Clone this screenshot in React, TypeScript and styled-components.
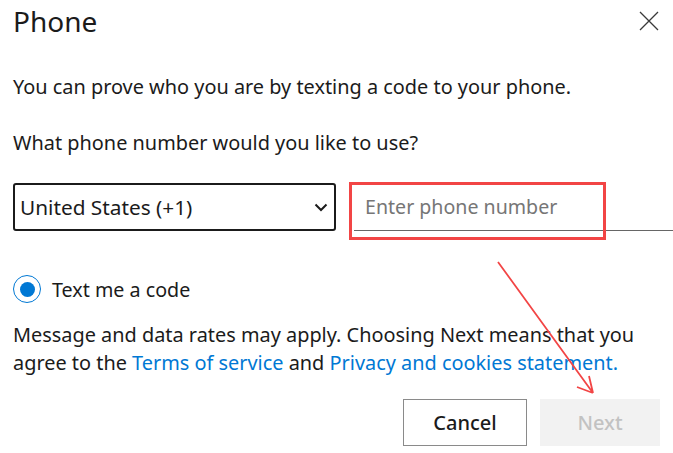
import React from 'react';
import styled, { createGlobalStyle } from 'styled-components';

const GlobalStyle = createGlobalStyle`
  html, body {
    margin: 0;
    padding: 0;
    background: #ffffff;
  }
  body {
    font-family: "Noto Sans", "Liberation Sans", sans-serif;
    color: #1b1b1b;
  }
`;

const Page = styled.div`
  position: relative;
  width: 673px;
  height: 453px;
  overflow: hidden;
  background: #ffffff;
`;

const Header = styled.div`
  display: flex;
  justify-content: space-between;
  align-items: center;
  height: 42px;
  padding: 0 12px 0 13px;
`;

const Title = styled.h1`
  margin: 0;
  font-size: 28px;
  font-weight: 400;
  line-height: 42px;
  color: #1b1b1b;
`;

const CloseButton = styled.button`
  display: flex;
  align-items: center;
  justify-content: center;
  width: 24px;
  height: 24px;
  padding: 0;
  border: none;
  background: transparent;
`;

const Body = styled.div`
  padding: 0 13px;
`;

const Text = styled.p<{ $top: number }>`
  margin: ${(p) => p.$top}px 0 0;
  font-size: 19.9px;
  line-height: 28px;
  color: #1b1b1b;
`;

const Link = styled.a`
  color: #0078d4;
  text-decoration: none;
`;

const FieldRow = styled.div`
  display: grid;
  grid-template-columns: 323px 1fr;
  column-gap: 18px;
  margin-top: 26px;
  margin-right: -13px;
`;

const Select = styled.div`
  display: flex;
  align-items: center;
  justify-content: space-between;
  box-sizing: border-box;
  height: 48px;
  padding: 0 6px 0 5px;
  border: 2px solid #1b1b1b;
  border-radius: 3px;
  font-size: 20.8px;
  color: #1b1b1b;
`;

const InputWrap = styled.div`
  position: relative;
  display: flex;
  align-items: center;
  box-sizing: border-box;
  height: 48px;
  border-bottom: 1px solid #666666;
`;

const Input = styled.input`
  width: 100%;
  border: none;
  outline: none;
  background: transparent;
  padding: 0 0 0 11px;
  font-family: inherit;
  font-size: 19.6px;
  color: #1b1b1b;

  &::placeholder {
    color: #767676;
  }
`;

const Highlight = styled.div`
  position: absolute;
  left: -5px;
  top: -1px;
  width: 257px;
  height: 58px;
  box-sizing: border-box;
  border: 3px solid #f24545;
  pointer-events: none;
`;

const RadioRow = styled.label`
  display: flex;
  align-items: center;
  gap: 11px;
  margin-top: 44px;
  font-size: 19.7px;
  color: #1b1b1b;
`;

const RadioCircle = styled.span`
  display: flex;
  align-items: center;
  justify-content: center;
  box-sizing: border-box;
  width: 28px;
  height: 28px;
  border: 1.5px solid #0078d4;
  border-radius: 50%;

  &::after {
    content: '';
    width: 15px;
    height: 15px;
    border-radius: 50%;
    background: #0078d4;
  }
`;

const Footer = styled.div`
  display: flex;
  justify-content: flex-end;
  gap: 13px;
  margin-top: 22px;
`;

const Button = styled.button<{ $disabled?: boolean }>`
  width: ${(p) => (p.$disabled ? 120 : 124)}px;
  height: 47px;
  box-sizing: border-box;
  border: ${(p) => (p.$disabled ? 'none' : '1px solid #8a8a8a')};
  background: ${(p) => (p.$disabled ? '#f2f2f2' : '#ffffff')};
  color: ${(p) => (p.$disabled ? '#c2c2c2' : '#1b1b1b')};
  font-family: inherit;
  font-size: 20px;
  font-weight: 500;
`;

const Arrow = styled.svg`
  position: absolute;
  left: 0;
  top: 0;
  pointer-events: none;
`;

const App = () => (
  <Page>
    <GlobalStyle />
    <Header>
      <Title>Phone</Title>
      <CloseButton aria-label="Close">
        <svg width="20" height="20" viewBox="0 0 20 20">
          <path d="M1 1 L19 19 M19 1 L1 19" stroke="#3a3a3a" strokeWidth="1.3" fill="none" />
        </svg>
      </CloseButton>
    </Header>
    <Body>
      <Text $top={31}>You can prove who you are by texting a code to your phone.</Text>
      <Text $top={28}>What phone number would you like to use?</Text>
      <FieldRow>
        <Select>
          <span>United States (+1)</span>
          <svg width="14" height="9" viewBox="0 0 14 9">
            <path d="M1.5 1.5 L7 7 L12.5 1.5" stroke="#1b1b1b" strokeWidth="2" fill="none" />
          </svg>
        </Select>
        <InputWrap>
          <Input placeholder="Enter phone number" />
          <Highlight />
        </InputWrap>
      </FieldRow>
      <RadioRow>
        <RadioCircle />
        Text me a code
      </RadioRow>
      <Text $top={18}>
        Message and data rates may apply. Choosing Next means that you
        <br />
        agree to the <Link href="#">Terms of service</Link> and{' '}
        <Link href="#">Privacy and cookies statement.</Link>
      </Text>
      <Footer>
        <Button>Cancel</Button>
        <Button $disabled>Next</Button>
      </Footer>
    </Body>
    <Arrow width="673" height="453" viewBox="0 0 673 453">
      <path d="M498 262 L593 393 M593 393 L577 387 M593 393 L589 376" stroke="#f24545" strokeWidth="1.8" fill="none" />
    </Arrow>
  </Page>
);

export default App;
